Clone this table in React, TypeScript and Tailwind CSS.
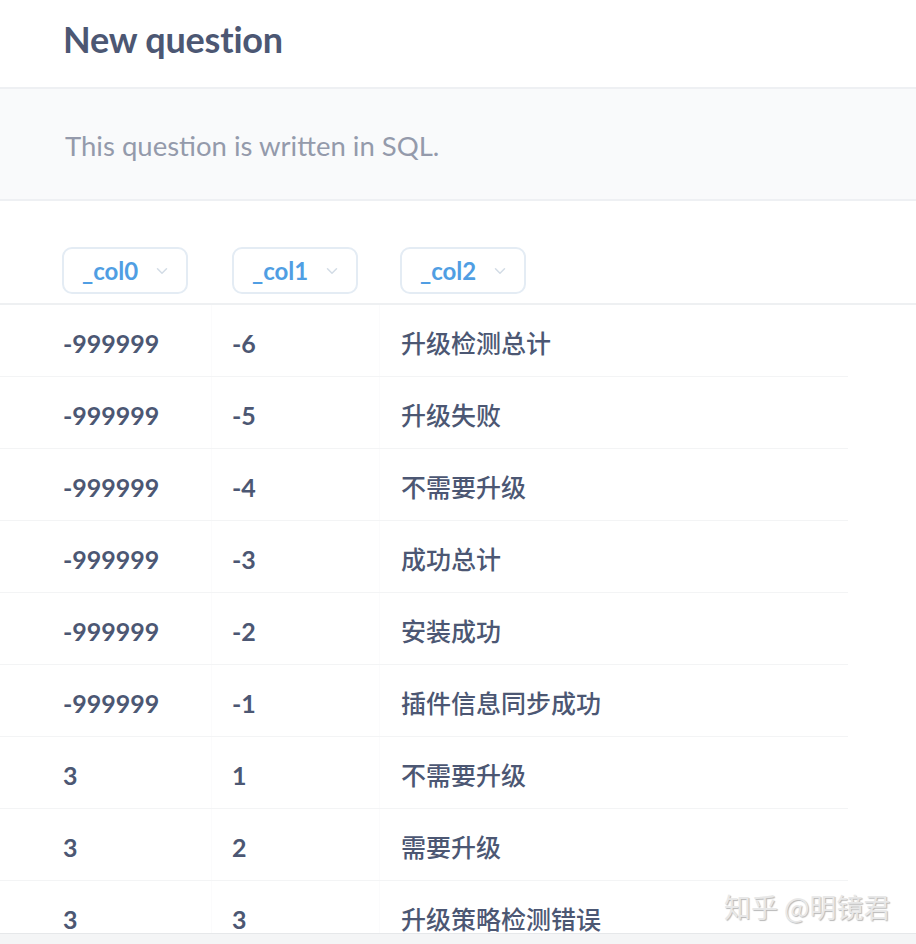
import { ChevronDown } from 'lucide-react';

const rows: [string, string, string][] = [
	['-999999', '-6', '升级检测总计'],
	['-999999', '-5', '升级失败'],
	['-999999', '-4', '不需要升级'],
	['-999999', '-3', '成功总计'],
	['-999999', '-2', '安装成功'],
	['-999999', '-1', '插件信息同步成功'],
	['3', '1', '不需要升级'],
	['3', '2', '需要升级'],
	['3', '3', '升级策略检测错误'],
];

const cols = ['_col0', '_col1', '_col2'];

export default function App() {
	return (
		<div
			className="w-[916px] h-[944px] overflow-hidden bg-white flex flex-col text-[#4c5773]"
			style={{ fontFamily: 'Lato, "Noto Sans CJK SC", sans-serif' }}
		>
			{/* Title */}
			<div className="h-[89px] shrink-0 flex items-center pl-[63px] border-b-2 border-[#eef0f3]">
				<h1 className="text-[36px] font-bold leading-none tracking-[-0.2px] -mt-[10px]">New question</h1>
			</div>

			{/* SQL notice */}
			<div className="h-[112px] shrink-0 flex items-center pl-[65px] bg-[#f9fafb] border-b-2 border-[#eef0f3]">
				<p className="text-[27.5px] text-[#949aab] leading-none mt-[3px]">This question is written in SQL.</p>
			</div>

			{/* Table */}
			<div className="flex-1 relative overflow-hidden">
				<div className="h-[104px] pt-[46px] border-b-2 border-[#eef0f2] flex">
					{cols.map((c, i) => (
						<div
							key={c}
							className={
								i === 0 ? 'w-[212px] pl-[62px]' : i === 1 ? 'w-[168px] pl-[20px]' : 'pl-[20px]'
							}
						>
							<div className="w-[126px] h-[47px] rounded-[10px] border-2 border-[#e4ecf4] flex items-center pl-[18px] gap-[15px]">
								<span className="text-[24px] font-bold text-[#509ee3] leading-none">{c}</span>
								<ChevronDown className="w-[18px] h-[18px] text-[#d3dce6]" strokeWidth={2} />
							</div>
						</div>
					))}
				</div>

				<div className="w-[848px]">
					{rows.map((r, i) => (
						<div key={i} className="h-[72px] flex border-b border-[#f3f4f5]">
							<div className="w-[212px] pl-[63px] pt-[5px] flex items-center border-r border-[#fbfbfc]">
								<span className="text-[25px] font-bold leading-none">{r[0]}</span>
							</div>
							<div className="w-[168px] pl-[20px] pt-[5px] flex items-center border-r border-[#fbfbfc]">
								<span className="text-[25px] font-bold leading-none">{r[1]}</span>
							</div>
							<div className="pl-[21px] pt-[5px] flex items-center">
								<span className="text-[25px] font-medium leading-none">{r[2]}</span>
							</div>
						</div>
					))}
				</div>

				{/* Watermark */}
				<div
					className="absolute left-[724px] top-[692px] text-[27px] text-[#e8e8e8] leading-none [text-shadow:1px_1px_1px_#b8b8b8] whitespace-nowrap"
					style={{ fontFamily: '"Noto Sans CJK SC", sans-serif' }}
				>
					知乎 @明镜君
				</div>
			</div>

			{/* Footer */}
			<div className="h-[11px] shrink-0 bg-[#f4f5f6] border-t border-[#e6e8ea]" />
		</div>
	);
}
